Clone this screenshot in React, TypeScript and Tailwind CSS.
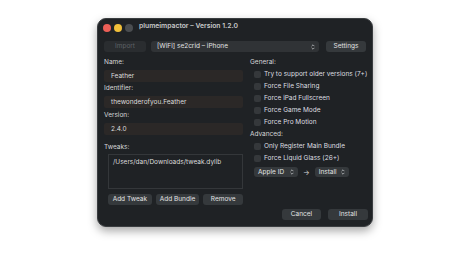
import React from "react";

const font = { fontFamily: "Inter, 'Liberation Sans', sans-serif" };

function Btn({ children, className = "", disabled = false }: { children: React.ReactNode; className?: string; disabled?: boolean }) {
  return (
    <div
      className={`flex items-center justify-center rounded-[3px] h-[11px] text-[6.5px] leading-none whitespace-nowrap ${
        disabled ? "bg-[#2a2d30] text-[#5d6166]" : "bg-[#35393c] text-[#e2e3e4]"
      } ${className}`}
    >
      {children}
    </div>
  );
}

function Chevrons() {
  return (
    <svg width="4" height="6" viewBox="0 0 4 6" className="shrink-0">
      <path d="M0.6 2.2 L2 0.8 L3.4 2.2 M0.6 3.8 L2 5.2 L3.4 3.8" stroke="#d0d2d4" strokeWidth="0.7" fill="none" />
    </svg>
  );
}

function Field({ children }: { children: React.ReactNode }) {
  return (
    <div className="h-[12px] bg-[#2b2827] rounded-[2px] flex items-center pl-[7px] text-[6.5px] text-[#dcdcdc] leading-none whitespace-nowrap">
      {children}
    </div>
  );
}

function Label({ children }: { children: React.ReactNode }) {
  return <div className="text-[6.5px] text-[#d6d7d8] leading-none h-[7px] whitespace-nowrap">{children}</div>;
}

function Check({ label }: { label: string }) {
  return (
    <div className="flex items-center h-[12px] pl-[4px] gap-[3px]">
      <div className="w-[7px] h-[7px] rounded-[2px] bg-[#35383b] shrink-0" />
      <span className="text-[6.5px] text-[#dedfe0] leading-none whitespace-nowrap">{label}</span>
    </div>
  );
}

export default function App() {
  return (
    <div className="w-[474px] h-[263px] bg-white overflow-hidden" style={font}>
      <div className="ml-[97px] mt-[18px] w-[276px] h-[209px] rounded-[9px] bg-[#1f2225] shadow-[0_4px_10px_rgba(0,0,0,0.35)] flex flex-col border border-[#3a3d40]">
        {/* title bar */}
        <div className="h-[17px] flex items-center relative pl-[5px]">
          <div className="flex gap-[3px]">
            <div className="w-[8px] h-[8px] rounded-full bg-[#ec5f57]" />
            <div className="w-[8px] h-[8px] rounded-full bg-[#f0bf3a]" />
            <div className="w-[8px] h-[8px] rounded-full bg-[#4a4d50]" />
          </div>
          <div className="absolute left-[41px] top-[4px] text-[6.8px] font-semibold text-[#c9cacb] leading-none whitespace-nowrap">
            plumeimpactor – Version 1.2.0
          </div>
        </div>
        {/* top row */}
        <div className="flex items-center px-[6px] mt-[5px] gap-[5px]">
          <Btn disabled className="w-[42px]">Import</Btn>
          <div className="flex-1 h-[11px] rounded-[3px] bg-[#303336] flex items-center justify-between pl-[6px] pr-[4px] text-[6.5px] text-[#e2e3e4] leading-none whitespace-nowrap">
            <span>[WiFi] se2crid – iPhone</span>
            <Chevrons />
          </div>
          <Btn className="w-[40px] ml-[2px]">Settings</Btn>
        </div>
        {/* body */}
        <div className="flex px-[6px] mt-[7px] gap-[7px]">
          <div className="w-[139px] flex flex-col">
            <Label>Name:</Label>
            <div className="mt-[4px]"><Field>Feather</Field></div>
            <div className="mt-[3px]"><Label>Identifier:</Label></div>
            <div className="mt-[4px]"><Field>thewonderofyou.Feather</Field></div>
            <div className="mt-[4px]"><Label>Version:</Label></div>
            <div className="mt-[4px]"><Field>2.4.0</Field></div>
            <div className="mt-[9px]"><Label>Tweaks:</Label></div>
            <div className="mt-[3px] ml-[4px] h-[35px] border border-[#34373a] bg-[#1f2225] pl-[4px] pt-[4px] text-[6.5px] text-[#dcdcdc] leading-none whitespace-nowrap">
              /Users/dan/Downloads/tweak.dylib
            </div>
            <div className="flex gap-[4px] mt-[5px] pl-[4px]">
              <Btn className="w-[44px]">Add Tweak</Btn>
              <Btn className="w-[44px]">Add Bundle</Btn>
              <Btn className="w-[40px]">Remove</Btn>
            </div>
          </div>
          <div className="flex-1 flex flex-col">
            <Label>General:</Label>
            <div className="mt-[2px]">
              <Check label="Try to support older versions (7+)" />
              <Check label="Force File Sharing" />
              <Check label="Force iPad Fullscreen" />
              <Check label="Force Game Mode" />
              <Check label="Force Pro Motion" />
            </div>
            <div className="mt-[3px]"><Label>Advanced:</Label></div>
            <div className="mt-[2px]">
              <Check label="Only Register Main Bundle" />
              <Check label="Force Liquid Glass (26+)" />
            </div>
            <div className="flex items-center mt-[3px] pl-[4px] gap-[5px]">
              <div className="w-[44px] h-[10px] rounded-[3px] bg-[#35393c] flex items-center justify-between px-[4px] text-[6.5px] text-[#e2e3e4] leading-none whitespace-nowrap">
                <span>Apple ID</span>
                <Chevrons />
              </div>
              <span className="text-[7px] text-[#d8d8d8] leading-none">→</span>
              <div className="w-[34px] h-[10px] rounded-[3px] bg-[#35393c] flex items-center justify-between px-[4px] text-[6.5px] text-[#e2e3e4] leading-none whitespace-nowrap">
                <span>Install</span>
                <Chevrons />
              </div>
            </div>
          </div>
        </div>
        <div className="flex-1" />
        <div className="flex justify-end gap-[7px] px-[4px] pb-[6px]">
          <Btn className="w-[39px]">Cancel</Btn>
          <Btn className="w-[40px]">Install</Btn>
        </div>
      </div>
    </div>
  );
}
